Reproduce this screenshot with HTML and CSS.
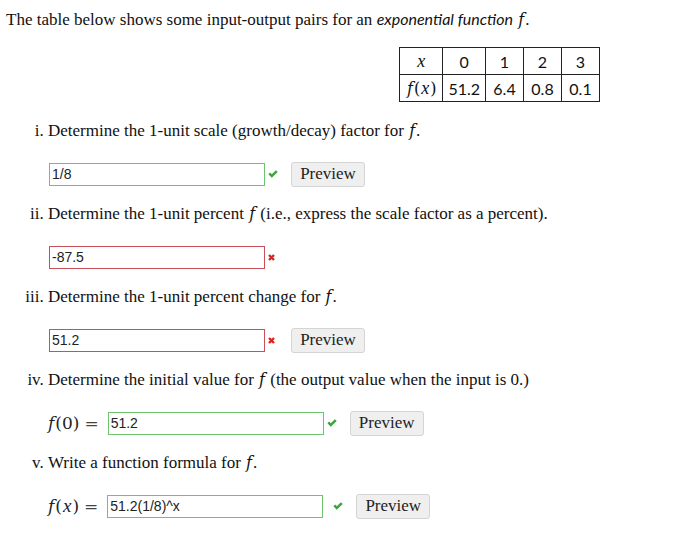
FILE: index.html
```html
<!DOCTYPE html>
<html>
<head>
<meta charset="utf-8">
<link rel="stylesheet" href="styles.css">
</head>
<body>
<div class="page">
  <p class="intro">The table below shows some input-output pairs for an <em class="emph">exponential function</em> <span class="m">f</span>.</p>
  <div class="table-wrap">
    <table class="tbl">
      <tr><td class="hd"><span class="mx">x</span></td><td>0</td><td>1</td><td>2</td><td>3</td></tr>
      <tr><td class="hd"><span class="m">f</span><span class="p">(</span><span class="mx">x</span><span class="p">)</span></td><td>51.2</td><td>6.4</td><td>0.8</td><td>0.1</td></tr>
    </table>
  </div>
  <ol class="parts">
    <li class="part">
      <div class="q">Determine the 1-unit scale (growth/decay) factor for <span class="m">f</span>.</div>
      <div class="row">
        <div class="ans ok">1/8</div>
        <span class="mark"><svg width="10" height="8" viewBox="0 0 10 8"><path d="M0.4 4.3 L2.2 2.6 L3.8 4.2 L7.9 0.2 L9.7 1.9 L3.8 7.7 Z" fill="#3ea53e"/></svg></span>
        <button class="btn">Preview</button>
      </div>
    </li>
    <li class="part">
      <div class="q">Determine the 1-unit percent <span class="m">f</span> (i.e., express the scale factor as a percent).</div>
      <div class="row">
        <div class="ans bad">-87.5</div>
        <span class="mark"><svg width="7" height="7" viewBox="0 0 7 7"><path d="M1 1 L6 6 M6 1 L1 6" stroke="#d22" stroke-width="2.4"/></svg></span>
      </div>
    </li>
    <li class="part">
      <div class="q">Determine the 1-unit percent change for <span class="m">f</span>.</div>
      <div class="row">
        <div class="ans bad">51.2</div>
        <span class="mark"><svg width="7" height="7" viewBox="0 0 7 7"><path d="M1 1 L6 6 M6 1 L1 6" stroke="#d22" stroke-width="2.4"/></svg></span>
        <button class="btn">Preview</button>
      </div>
    </li>
    <li class="part">
      <div class="q">Determine the initial value for <span class="m">f</span> (the output value when the input is 0.)</div>
      <div class="row">
        <span class="lhs"><span class="m">f</span><span class="p">(0)</span><span class="eq">=</span></span>
        <div class="ans ok">51.2</div>
        <span class="mark"><svg width="10" height="8" viewBox="0 0 10 8"><path d="M0.4 4.3 L2.2 2.6 L3.8 4.2 L7.9 0.2 L9.7 1.9 L3.8 7.7 Z" fill="#3ea53e"/></svg></span>
        <button class="btn">Preview</button>
      </div>
    </li>
    <li class="part">
      <div class="q">Write a function formula for <span class="m">f</span>.</div>
      <div class="row">
        <span class="lhs"><span class="m">f</span><span class="p">(</span><span class="mx">x</span><span class="p">)</span><span class="eq">=</span></span>
        <div class="ans ok">51.2(1/8)^x</div>
        <span class="mark wide"><svg width="10" height="8" viewBox="0 0 10 8"><path d="M0.4 4.3 L2.2 2.6 L3.8 4.2 L7.9 0.2 L9.7 1.9 L3.8 7.7 Z" fill="#3ea53e"/></svg></span>
        <button class="btn">Preview</button>
      </div>
    </li>
  </ol>
</div>
</body>
</html>
```

FILE: styles.css
```css
html, body {
  margin: 0;
  padding: 0;
  background: #fff;
}
.page {
  padding: 8px 6px 0 6px;
  font-family: "Liberation Serif", "Times New Roman", serif;
  font-size: 17px;
  color: #111;
}
.intro {
  margin: 0;
  line-height: 22px;
}
.emph {
  font-family: "Lato", "Open Sans", sans-serif;
  font-style: italic;
  font-size: 16px;
}
.m {
  font-family: "DejaVu Serif", serif;
  font-style: italic;
  font-size: 0.94em;
  padding: 0 1px;
}
.mx {
  font-family: "Liberation Serif", serif;
  font-style: italic;
  font-size: 1.1em;
  padding: 0 1px;
}
.p {
  font-family: "DejaVu Serif", serif;
  font-size: 0.94em;
}
.table-wrap {
  display: flex;
  justify-content: flex-end;
  padding-right: 94px;
  margin-top: 16px;
}
.tbl {
  border-collapse: collapse;
  border: 1.5px solid #222;
}
.tbl td {
  border: 1px solid #222;
  height: 26px;
  min-width: 27px;
  padding: 0 5px;
  text-align: center;
  font-family: "Lato", "Open Sans", sans-serif;
  font-size: 16px;
}
.tbl td.hd {
  font-family: "DejaVu Serif", serif;
  font-size: 16px;
  padding: 0 6px;
}
.tbl td.hd .m, .tbl td.hd .p {
  font-size: 16px;
}
.tbl td.hd .mx {
  font-size: 18px;
}
.parts {
  list-style: lower-roman;
  margin: 18px 0 0 0;
  padding-left: 42px;
}
.part {
  margin: 0 0 16px 0;
}
.q {
  line-height: 22px;
}
.row {
  display: flex;
  align-items: center;
  margin-top: 19px;
  height: 26px;
  padding-left: 1px;
}
.lhs {
  font-size: 17px;
  margin-right: 9px;
  margin-left: -2px;
  white-space: nowrap;
  color: #222;
}
.lhs .m, .lhs .p {
  font-size: 17px;
}
.lhs .mx {
  font-size: 19px;
}
.eq {
  font-family: "DejaVu Serif", serif;
  margin-left: 5px;
  color: #444;
}
.ans {
  box-sizing: border-box;
  width: 216px;
  height: 23px;
  border: 1px solid #7ccd7c;
  font-family: "Liberation Sans", Arial, sans-serif;
  font-size: 14px;
  line-height: 21px;
  padding-left: 2px;
  color: #222;
  background: #fff;
}
.ans.ok {
  border-color: #6cc46c;
}
.ans.bad {
  border-color: #c8505a;
}
.mark {
  width: 26px;
  display: flex;
  align-items: center;
  padding-left: 3px;
  box-sizing: border-box;
}
.mark.wide {
  width: 33px;
  padding-left: 10px;
}
.btn {
  font-family: "Liberation Serif", serif;
  font-size: 17px;
  color: #222;
  background: #efefef;
  border: 1px solid #d4d4d4;
  border-radius: 3px;
  height: 25px;
  width: 74px;
  padding: 0;
}
```
